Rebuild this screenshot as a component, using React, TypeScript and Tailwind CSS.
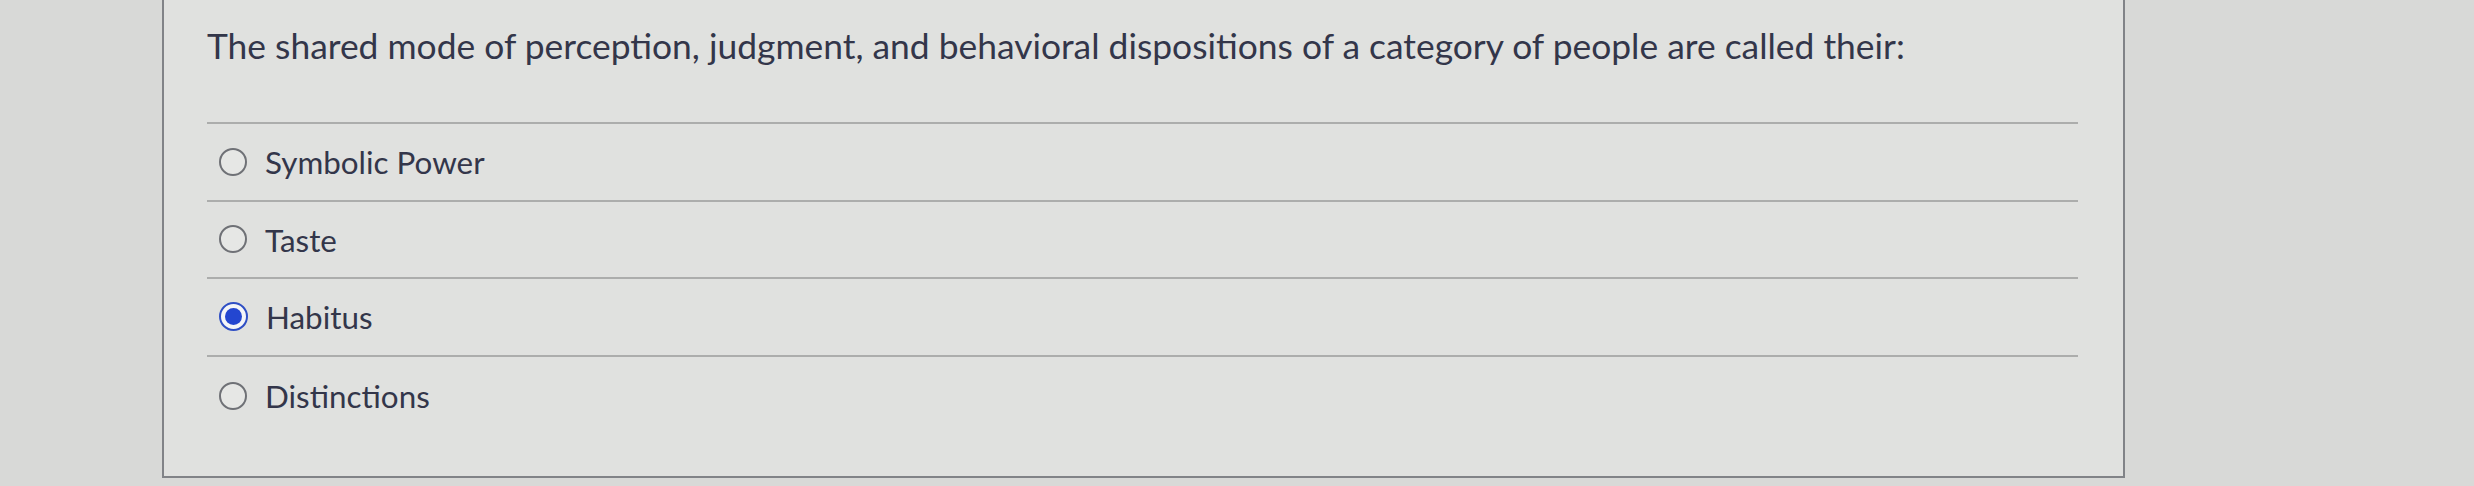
import React from "react";

const options = [
  { label: "Symbolic Power", checked: false },
  { label: "Taste", checked: false },
  { label: "Habitus", checked: true },
  { label: "Distinctions", checked: false },
];

function Radio({ checked }: { checked: boolean }) {
  if (checked) {
    return (
      <span className="flex h-[29px] w-[29px] shrink-0 items-center justify-center rounded-full border-[2px] border-[#2f4fc4] bg-[#f4f5f8]">
        <span className="h-[17px] w-[17px] rounded-full bg-[#2346d0]" />
      </span>
    );
  }
  return (
    <span className="h-[28px] w-[28px] shrink-0 rounded-full border-[2.5px] border-[#6f7176] bg-[#e6e7e5]" />
  );
}

export default function App() {
  return (
    <div
      className="h-[486px] w-full overflow-hidden bg-[#d8d9d7]"
      style={{ fontFamily: "Lato, 'Open Sans', sans-serif" }}
    >
      <div className="ml-[162px] h-[478px] w-[1963px] border-x-[2px] border-b-[2px] border-[#818387] bg-[#e0e1df] pl-[43px] pr-[45px]">
        <div className="pt-[21px] pb-[51px] text-[35.4px] leading-[50px] text-[#33364a]">
          The shared mode of perception, judgment, and behavioral dispositions of a category of people are called their:
        </div>
        <div className="border-t-[2px] border-[#acadac]">
          {options.map((o, i) => (
            <div
              key={o.label}
              className={`flex h-[77.6px] items-center gap-[18px] pl-[12px] ${
                i < options.length - 1 ? "border-b-[2px] border-[#acadac]" : ""
              }`}
            >
              <Radio checked={o.checked} />
              <span className="pt-[2px] text-[31.4px] leading-none text-[#33364a]">{o.label}</span>
            </div>
          ))}
        </div>
      </div>
    </div>
  );
}
